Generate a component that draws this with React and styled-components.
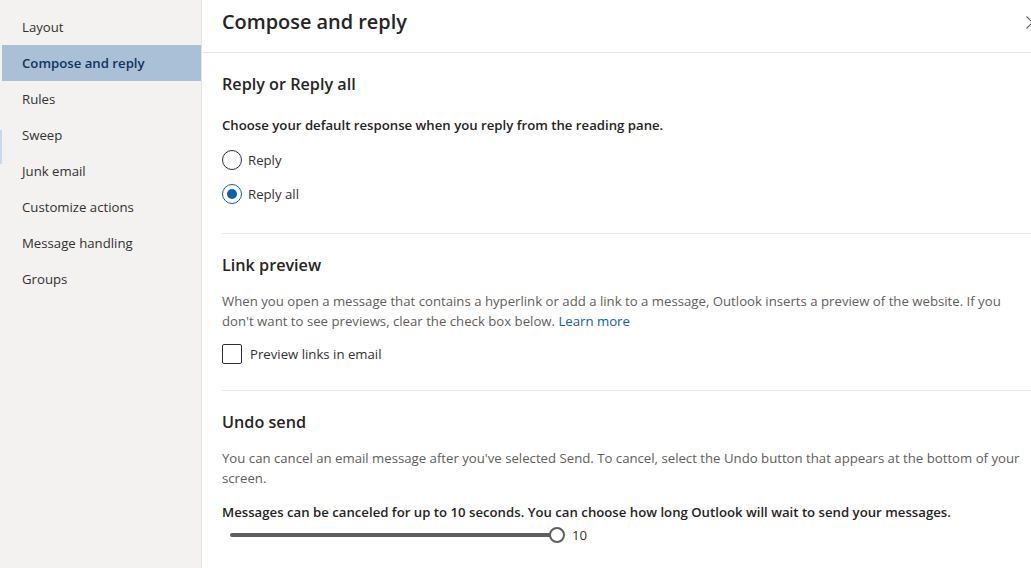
import React from "react";
import styled, { createGlobalStyle } from "styled-components";

const Global = createGlobalStyle`
  html, body { margin: 0; padding: 0; background: #fff; overflow: hidden; }
  body { font-family: "Segoe UI", "Open Sans", "Noto Sans", sans-serif; color: #323130; }
  * { box-sizing: border-box; }
`;

const Shell = styled.div`
  display: flex;
  width: 1048px;
  height: 568px;
  overflow: hidden;
`;

const Sidebar = styled.nav`
  position: relative;
  width: 202px;
  flex: none;
  background: #f3f2f1;
  border-right: 1px solid #e6e4e2;
  padding: 9px 0 0 2px;
  display: flex;
  flex-direction: column;
`;

const ScrollMark = styled.span`
  position: absolute;
  left: 0;
  top: 130px;
  width: 2px;
  height: 34px;
  background: #c7d9ec;
`;

const NavItem = styled.div`
  height: 36px;
  display: flex;
  align-items: center;
  padding-left: 20px;
  font-size: 13.2px;
  color: ${(p) => (p.$active ? "#0f3460" : "#323130")};
  background: ${(p) => (p.$active ? "#a9c0d6" : "transparent")};
  font-weight: ${(p) => (p.$active ? 600 : 400)};
`;

const Main = styled.main`
  flex: 1;
  display: flex;
  flex-direction: column;
`;

const Header = styled.header`
  flex: none;
  height: 53px;
  border-bottom: 1px solid #e8e6e4;
  display: flex;
  align-items: flex-start;
  justify-content: space-between;
  padding: 8px 0 0 20px;
`;

const Title = styled.h1`
  margin: 0;
  font-size: 19.9px;
  line-height: 28px;
  font-weight: 600;
  color: #252423;
`;

const CloseBtn = styled.button`
  width: 32px;
  height: 28px;
  border: 0;
  background: transparent;
  display: flex;
  align-items: center;
  justify-content: center;
  padding: 0;
  color: #605e5c;
`;

const Content = styled.div`
  padding: 0 0 0 20px;
  display: flex;
  flex-direction: column;
`;

const Section = styled.section`
  flex: none;
  padding: 19px 24px ${(p) => p.$pb || 19}px 0;
  border-bottom: ${(p) => (p.$last ? "0" : "1px solid #e8e6e4")};
  display: flex;
  flex-direction: column;
`;

const SectionTitle = styled.h2`
  margin: 0 0 15px;
  font-size: 16.2px;
  font-weight: 600;
  color: #252423;
  line-height: 24px;
`;

const Strong = styled.p`
  margin: 4px 0 8px;
  font-size: 13.2px;
  font-weight: 600;
  color: #252423;
  line-height: 20px;
`;

const Para = styled.p`
  margin: -1px 0 ${(p) => p.$mb || 6}px;
  font-size: 13.2px;
  line-height: 20px;
  color: #605e5c;
`;

const Link = styled.a`
  color: #0f5ea8;
  text-decoration: none;
`;

const OptionRow = styled.label`
  display: flex;
  align-items: center;
  height: 34px;
  font-size: 13.2px;
  color: #323130;
  gap: ${(p) => p.$gap || 6}px;
`;

const RadioCircle = styled.span`
  width: 20px;
  height: 20px;
  border-radius: 50%;
  border: 1px solid ${(p) => (p.$checked ? "#0f5ea8" : "#323130")};
  display: flex;
  align-items: center;
  justify-content: center;
  &::after {
    content: "";
    width: 10px;
    height: 10px;
    border-radius: 50%;
    background: ${(p) => (p.$checked ? "#0f5ea8" : "transparent")};
  }
`;

const CheckBox = styled.span`
  width: 20px;
  height: 20px;
  border: 1px solid #323130;
  border-radius: 2px;
`;

const SliderRow = styled.div`
  display: flex;
  align-items: center;
  height: 28px;
  padding-left: 8px;
  margin-top: -9px;
  gap: 8px;
  font-size: 13.2px;
  color: #323130;
`;

const Track = styled.div`
  position: relative;
  width: 330px;
  height: 4px;
  border-radius: 2px;
  background: #605e5c;
`;

const Thumb = styled.span`
  position: absolute;
  right: -5px;
  top: 50%;
  width: 16px;
  height: 16px;
  margin-top: -8px;
  border-radius: 50%;
  border: 2px solid #605e5c;
  background: #fff;
`;

const SliderValue = styled.span`
  margin-left: 4px;
`;

const navItems = [
  "Layout",
  "Compose and reply",
  "Rules",
  "Sweep",
  "Junk email",
  "Customize actions",
  "Message handling",
  "Groups",
];

export default function App() {
  return (
    <>
      <Global />
      <Shell>
        <Sidebar>
          <ScrollMark />
          {navItems.map((n) => (
            <NavItem key={n} $active={n === "Compose and reply"}>
              {n}
            </NavItem>
          ))}
        </Sidebar>
        <Main>
          <Header>
            <Title>Compose and reply</Title>
            <CloseBtn aria-label="Close">
              <svg width="13" height="13" viewBox="0 0 13 13">
                <path d="M0.5 0.5L12.5 12.5M12.5 0.5L0.5 12.5" stroke="#605e5c" strokeWidth="1.1" fill="none" />
              </svg>
            </CloseBtn>
          </Header>
          <Content>
            <Section $pb={22}>
              <SectionTitle>Reply or Reply all</SectionTitle>
              <Strong>Choose your default response when you reply from the reading pane.</Strong>
              <OptionRow>
                <RadioCircle />
                Reply
              </OptionRow>
              <OptionRow>
                <RadioCircle $checked />
                Reply all
              </OptionRow>
            </Section>
            <Section>
              <SectionTitle>Link preview</SectionTitle>
              <Para>
                When you open a message that contains a hyperlink or add a link to a message, Outlook
                inserts a preview of the website. If you don't want to see previews, clear the check box
                below. <Link>Learn more</Link>
              </Para>
              <OptionRow $gap={8}>
                <CheckBox />
                Preview links in email
              </OptionRow>
            </Section>
            <Section $last>
              <SectionTitle>Undo send</SectionTitle>
              <Para $mb={10}>
                You can cancel an email message after you've selected Send. To cancel, select the Undo
                button that appears at the bottom of your screen.
              </Para>
              <Strong>
                Messages can be canceled for up to 10 seconds. You can choose how long Outlook will wait
                to send your messages.
              </Strong>
              <SliderRow>
                <Track>
                  <Thumb />
                </Track>
                <SliderValue>10</SliderValue>
              </SliderRow>
            </Section>
          </Content>
        </Main>
      </Shell>
    </>
  );
}
